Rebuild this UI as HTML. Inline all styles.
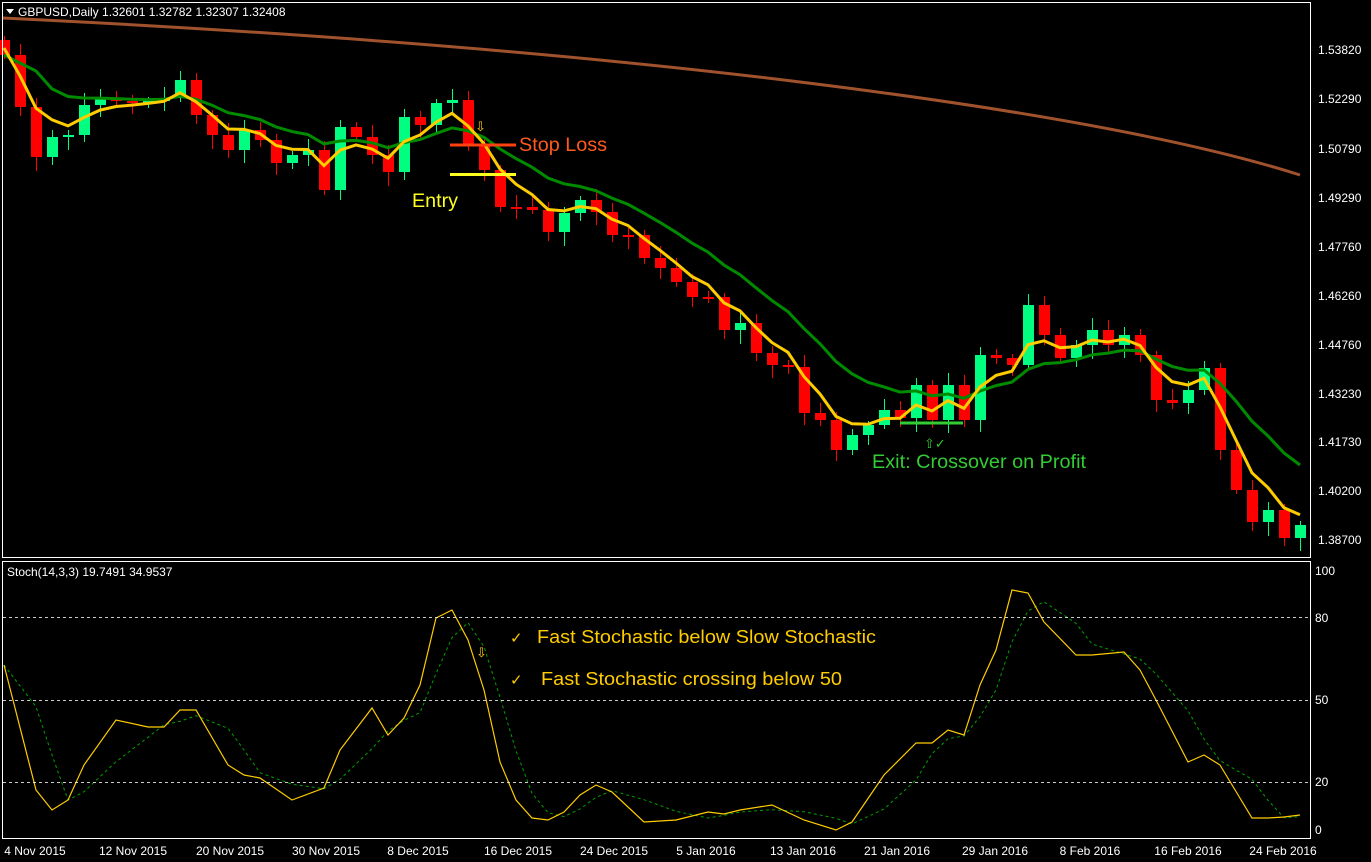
<!DOCTYPE html>
<html><head><meta charset="utf-8"><style>
html,body{margin:0;padding:0;background:#000;width:1371px;height:862px;overflow:hidden}
svg{display:block}
text{font-family:"Liberation Sans",sans-serif}
</style></head><body>
<svg id="s" width="1371" height="862" xmlns="http://www.w3.org/2000/svg">
<rect width="1371" height="862" fill="#000"/>
<g id="g"></g>
<rect x="2.5" y="2.5" width="1308" height="555" fill="none" stroke="#fff" stroke-width="1"/>
<rect x="2.5" y="561.5" width="1308" height="277" fill="none" stroke="#fff" stroke-width="1"/>
<g fill="#fff" font-size="12">
<text x="18" y="16">GBPUSD,Daily  1.32601 1.32782 1.32307 1.32408</text>
<text x="7" y="576">Stoch(14,3,3) 19.7491 34.9537</text>
</g>
<polygon points="6,9 14,9 10,14" fill="#fff"/>
<g fill="#fff" font-size="12">
<text x="1318" y="54">1.53820</text><text x="1318" y="103">1.52290</text><text x="1318" y="153">1.50790</text>
<text x="1318" y="202">1.49290</text><text x="1318" y="251">1.47760</text><text x="1318" y="300">1.46260</text>
<text x="1318" y="349">1.44760</text><text x="1318" y="398">1.43230</text><text x="1318" y="446">1.41730</text>
<text x="1318" y="495">1.40200</text><text x="1318" y="544">1.38700</text>
<text x="1315" y="575">100</text><text x="1315" y="622">80</text><text x="1315" y="704">50</text>
<text x="1315" y="786">20</text><text x="1315" y="834">0</text>
</g>
<g stroke="#fff" stroke-dasharray="3,3" stroke-width="1" opacity="0.8">
<line x1="3" y1="617.5" x2="1310" y2="617.5"/><line x1="3" y1="700.5" x2="1310" y2="700.5"/><line x1="3" y1="782.5" x2="1310" y2="782.5"/>
</g>
<g fill="#fff" font-size="12" text-anchor="middle">
<text x="35" y="855">4 Nov 2015</text><text x="133" y="855">12 Nov 2015</text><text x="230" y="855">20 Nov 2015</text>
<text x="326" y="855">30 Nov 2015</text><text x="418" y="855">8 Dec 2015</text><text x="518" y="855">16 Dec 2015</text>
<text x="614" y="855">24 Dec 2015</text><text x="706" y="855">5 Jan 2016</text><text x="803" y="855">13 Jan 2016</text>
<text x="897" y="855">21 Jan 2016</text><text x="995" y="855">29 Jan 2016</text><text x="1090" y="855">8 Feb 2016</text>
<text x="1188" y="855">16 Feb 2016</text><text x="1283" y="855">24 Feb 2016</text>
</g>
<line x1="450" y1="145" x2="516" y2="145" stroke="#ff4010" stroke-width="3"/>
<line x1="450" y1="174.5" x2="516" y2="174.5" stroke="#ffff20" stroke-width="3"/>
<line x1="900" y1="423" x2="963" y2="423" stroke="#33cc33" stroke-width="3"/>
<text x="519" y="151" fill="#ff5a1e" font-size="19" textLength="88" lengthAdjust="spacingAndGlyphs">Stop Loss</text>
<text x="412" y="207" fill="#ffff20" font-size="19" textLength="46" lengthAdjust="spacingAndGlyphs">Entry</text>
<text x="872" y="468" fill="#33cc33" font-size="19" textLength="214" lengthAdjust="spacingAndGlyphs">Exit: Crossover on Profit</text>
<text x="475" y="131" fill="#ffcc00" font-size="13">⇩</text>
<text x="924" y="448" fill="#33cc33" font-size="13">⇧✓</text>
<text x="476" y="657" fill="#ffcc00" font-size="13">⇩</text>
<text x="510" y="643" fill="#ffcc00" font-size="15">✓</text>
<text x="537" y="643" fill="#ffcc00" font-size="18" textLength="339" lengthAdjust="spacingAndGlyphs">Fast Stochastic below Slow Stochastic</text>
<text x="510" y="685" fill="#ffcc00" font-size="15">✓</text>
<text x="541" y="685" fill="#ffcc00" font-size="18" textLength="301" lengthAdjust="spacingAndGlyphs">Fast Stochastic crossing below 50</text>
</svg>
<script>
var C=[55,107,157,137,135,105,99,101,103,101,98,80,115,135,150,130,140,163,155,150,190,127,137,155,172,117,125,103,100,145,170,207,207,210,232,213,200,212,235,235,258,268,282,297,297,330,323,353,365,367,413,420,450,435,425,410,418,385,420,385,420,355,358,365,305,335,358,345,330,345,335,355,400,403,390,368,450,490,522,510,538,525];
var g=document.getElementById('g'),h='';
var prev=40;
for(var i=0;i<C.length;i++){var x=4+16*i,o=prev,c=C[i];var up=c<o;var t=Math.min(o,c),b=Math.max(o,c);if(b-t<2){b=t+2;}
var col=up?'#00ff80':'#ff0000';var wt=t-4-((i*7)%9),wb=b+4+((i*5)%11);
h+='<line x1="'+(x+.5)+'" y1="'+wt+'" x2="'+(x+.5)+'" y2="'+wb+'" stroke="'+col+'"/>';
h+='<rect x="'+(x-5)+'" y="'+t+'" width="11" height="'+(b-t)+'" fill="'+col+'"/>';prev=c;}
function ema(a,n){var k=2/(n+1),r=[],v=a[0];for(var i=0;i<a.length;i++){v=v+(a[i]-v)*k;r.push(v);}return r;}
var y5=ema(C,4);
function pl(arr,col,w){var p='';for(var i=0;i<arr.length;i++)p+=(4+16*i)+','+arr[i].toFixed(1)+' ';return '<polyline points="'+p+'" fill="none" stroke="'+col+'" stroke-width="'+w+'"/>';}
var y10b=ema(C,11);
h+=pl(y10b.map(function(v,i){return i<3?55+i*8:v}),'#008a00',3);
h+=pl(y5.map(function(v,i){return i==0?48:v}),'#ffcc00',3);
h+='<path d="M3,18 Q460,40 800,82 T1300,175" fill="none" stroke="#a0522d" stroke-width="3"/>';
var S=[[4,665],[36,790],[52,810],[68,800],[84,765],[116,720],[148,727],[164,727],[180,710],[196,710],[228,765],[244,775],[260,778],[292,800],[324,788],[340,750],[372,708],[388,735],[404,718],[420,685],[436,618],[452,610],[468,640],[484,690],[500,762],[516,800],[532,818],[548,820],[564,812],[580,795],[596,785],[612,792],[644,822],[676,820],[708,812],[724,814],[740,810],[772,805],[804,820],[836,830],[852,822],[884,775],[916,743],[932,743],[948,730],[964,735],[980,685],[996,650],[1012,590],[1028,593],[1044,622],[1076,655],[1092,655],[1124,652],[1140,670],[1156,700],[1188,762],[1204,755],[1220,765],[1252,818],[1268,818],[1284,817],[1300,815]];
var p='',q='';for(var i=0;i<S.length;i++){p+=S[i][0]+','+S[i][1]+' ';var a=S[Math.max(0,i-1)][1],b2=S[Math.max(0,i-2)][1];q+=S[i][0]+','+((S[i][1]+a+b2)/3).toFixed(1)+' ';}
h+='<polyline points="'+q+'" fill="none" stroke="#00a000" stroke-dasharray="3,3"/>';
h+='<polyline points="'+p+'" fill="none" stroke="#ffcc00" stroke-width="1.2"/>';
g.innerHTML=h;
</script>
</body></html>
